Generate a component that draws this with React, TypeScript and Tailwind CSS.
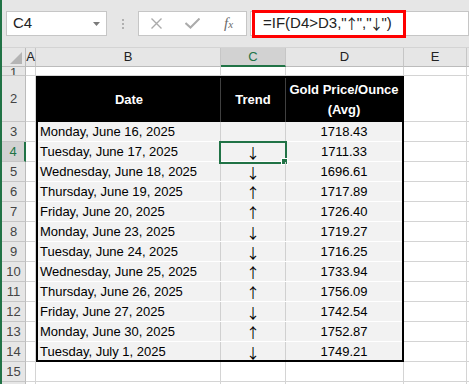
import React from 'react';

type Trend = '' | '↑' | '↓';

const data: [string, Trend, string][] = [
  ['Monday, June 16, 2025', '', '1718.43'],
  ['Tuesday, June 17, 2025', '↓', '1711.33'],
  ['Wednesday, June 18, 2025', '↓', '1696.61'],
  ['Thursday, June 19, 2025', '↑', '1717.89'],
  ['Friday, June 20, 2025', '↑', '1726.40'],
  ['Monday, June 23, 2025', '↓', '1719.27'],
  ['Tuesday, June 24, 2025', '↓', '1716.25'],
  ['Wednesday, June 25, 2025', '↑', '1733.94'],
  ['Thursday, June 26, 2025', '↑', '1756.09'],
  ['Friday, June 27, 2025', '↓', '1742.54'],
  ['Monday, June 30, 2025', '↑', '1752.87'],
  ['Tuesday, July 1, 2025', '↓', '1749.21'],
];

// arrows come out tiny in Liberation Sans, the CJK face draws them like the reference
const arrowFont = "font-['Noto_Sans_CJK_JP',sans-serif]";

const FormulaBar = () => (
  <div className="h-[48px] shrink-0 bg-[#e6e6e6] border-b border-[#d4d4d4] flex items-center pl-[4px]">
    {/* name box */}
    <div className="w-[101px] h-[25px] shrink-0 bg-white border border-[#c6c6c6] flex items-center justify-between pl-[6px] pr-[6px]">
      <span className="text-[15px] text-[#222]">C4</span>
      <svg width="7" height="4" viewBox="0 0 7 4">
        <polygon points="0,0 7,0 3.5,4" fill="#7a7a7a" />
      </svg>
    </div>

    {/* grip */}
    <div className="ml-[15px] flex flex-col gap-[2px]">
      <div className="w-[2px] h-[2px] bg-[#b0b0b0]" />
      <div className="w-[2px] h-[2px] bg-[#b0b0b0]" />
      <div className="w-[2px] h-[2px] bg-[#b0b0b0]" />
    </div>

    {/* cancel / enter / fx */}
    <div className="ml-[14px] w-[109px] h-[25px] shrink-0 bg-white border border-[#c6c6c6] flex items-center">
      <svg className="ml-[11px]" width="13" height="11" viewBox="0 0 13 11">
        <path d="M1.5 0.5 L11.5 10.5 M11.5 0.5 L1.5 10.5" stroke="#ababab" strokeWidth="1.4" fill="none" />
      </svg>
      <svg className="ml-[22px]" width="15" height="11" viewBox="0 0 15 11">
        <polyline points="0.5,5 5.5,9.5 14.5,0.5" stroke="#ababab" strokeWidth="2" fill="none" />
      </svg>
      <span className="ml-[24px] font-['Liberation_Serif',serif] italic text-[#6b6b6b] text-[15px] leading-none">
        f<span className="text-[11px]">x</span>
      </span>
    </div>

    {/* formula box */}
    <div className="ml-[3px] flex-1 h-[25px] bg-white border border-[#c6c6c6] flex items-center">
      <div className="ml-[1px] w-[154px] h-[28px] shrink-0 border-[3px] border-[#ff0000] flex items-center pl-[8px] text-[15px] text-[#222] whitespace-nowrap">
        =IF(D4&gt;D3,"<span className={`${arrowFont} text-[14px] -mx-[2px]`}>↑</span>","<span
          className={`${arrowFont} text-[14px] -mx-[2px]`}
        >
          ↓
        </span>")
      </div>
    </div>
  </div>
);

const ColHead = ({ label, active }: { label: string; active?: boolean }) => (
  <div
    className={`flex items-center justify-center border-r border-[#c6c6c6] text-[13px] ${
      active
        ? 'bg-[#d2d2d2] text-[#217346] border-b-2 border-b-[#217346]'
        : 'bg-[#e6e6e6] text-[#222] border-b border-b-[#bcbcbc]'
    }`}
  >
    {label}
  </div>
);

const RowHead = ({ n, active, short }: { n?: number; active?: boolean; short?: boolean }) => (
  <div
    className={`flex justify-center border-b border-[#c6c6c6] overflow-hidden text-[13px] ${
      short ? 'items-start' : 'items-center'
    } ${
      active
        ? 'bg-[#d2d2d2] text-[#217346] border-r-2 border-r-[#217346]'
        : 'bg-[#e6e6e6] text-[#444] border-r border-r-[#bcbcbc]'
    }`}
  >
    {n !== undefined && <span className={short ? 'leading-[20px] -mt-[4px]' : 'leading-[20px]'}>{n}</span>}
  </div>
);

const Blank = ({ last }: { last?: boolean }) => (
  <div className={`bg-white border-b border-[#d4d4d4] ${last ? '' : 'border-r'}`} />
);

const GoldTable = () => (
  <div className="col-start-3 col-end-6 row-start-3 row-end-16 border-2 border-black bg-[#f2f2f2] flex flex-col overflow-hidden">
    <div className="h-[44px] shrink-0 bg-black text-white font-bold text-[13px] flex">
      <div className="w-[183px] border-r border-[#404040] flex items-center justify-center">Date</div>
      <div className="w-[65px] border-r border-[#404040] flex items-center justify-center">Trend</div>
      <div className="flex-1 flex flex-col items-center justify-center leading-[20px]">
        <span>Gold Price/Ounce</span>
        <span>(Avg)</span>
      </div>
    </div>
    {data.map(([date, trend, price], i) => (
      <div key={i} className="h-[20px] shrink-0 flex border-b border-white text-[13px]">
        <div className="w-[183px] border-r border-[#d0d0d0] flex items-center pl-[2px] whitespace-nowrap">{date}</div>
        <div
          className={`w-[65px] border-r border-[#d0d0d0] flex items-center justify-center relative text-[14px] leading-none ${arrowFont}`}
        >
          {trend}
          {i === 1 && (
            <div className="absolute -left-[2px] -top-[1px] w-[68px] h-[23px] border-2 border-[#217346]">
              <div className="absolute left-[60px] top-[15px] w-[7px] h-[7px] bg-[#217346] border border-white" />
            </div>
          )}
        </div>
        <div className="flex-1 flex items-center justify-center">{price}</div>
      </div>
    ))}
  </div>
);

const Sheet = () => (
  <div className="grid grid-cols-[24px_10px_185px_65px_118px_63px_1fr] grid-rows-[19px_9px_46px_repeat(14,20px)]">
    {/* corner */}
    <div className="relative bg-[#e6e6e6] border-r border-b border-[#bcbcbc]">
      <svg className="absolute right-[3px] bottom-[2px]" width="12" height="12" viewBox="0 0 12 12">
        <polygon points="12,0 12,12 0,12" fill="#b4b4b4" />
      </svg>
    </div>
    <ColHead label="A" />
    <ColHead label="B" />
    <ColHead label="C" active />
    <ColHead label="D" />
    <ColHead label="E" />
    <div className="bg-[#e6e6e6] border-b border-[#bcbcbc]" />

    {/* row 1 */}
    <RowHead n={1} short />
    <Blank />
    <Blank />
    <Blank />
    <Blank />
    <Blank />
    <Blank last />

    {/* rows 2 - 14: B..D held by the table */}
    {Array.from({ length: 13 }, (_, i) => i + 2).map((n) => (
      <React.Fragment key={n}>
        <RowHead n={n} active={n === 4} />
        <Blank />
        <Blank />
        <Blank last />
      </React.Fragment>
    ))}

    {/* row 15 and the edge of 16 */}
    <RowHead n={15} />
    <Blank />
    <Blank />
    <Blank />
    <Blank />
    <Blank />
    <Blank last />
    <RowHead />
    <Blank />
    <Blank />
    <Blank />
    <Blank />
    <Blank />
    <Blank last />

    <GoldTable />
  </div>
);

export default function App() {
  return (
    <div className="w-[469px] h-[384px] overflow-hidden bg-white flex font-['Liberation_Sans',Arial,sans-serif] text-black">
      <div className="w-[2px] shrink-0 bg-[#217346]" />
      <div className="flex-1 min-w-0 flex flex-col">
        <FormulaBar />
        <Sheet />
      </div>
    </div>
  );
}
